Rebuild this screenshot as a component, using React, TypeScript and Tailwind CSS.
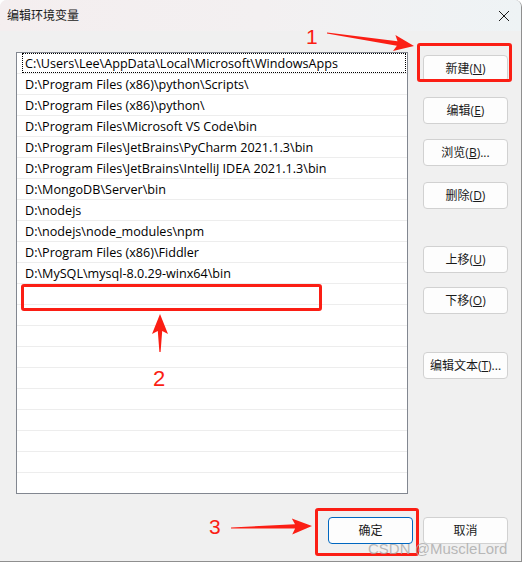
import React from "react";

const rows = [
  "C:\\Users\\Lee\\AppData\\Local\\Microsoft\\WindowsApps",
  "D:\\Program Files (x86)\\python\\Scripts\\",
  "D:\\Program Files (x86)\\python\\",
  "D:\\Program Files\\Microsoft VS Code\\bin",
  "D:\\Program Files\\JetBrains\\PyCharm 2021.1.3\\bin",
  "D:\\Program Files\\JetBrains\\IntelliJ IDEA 2021.1.3\\bin",
  "D:\\MongoDB\\Server\\bin",
  "D:\\nodejs",
  "D:\\nodejs\\node_modules\\npm",
  "D:\\Program Files (x86)\\Fiddler",
  "D:\\MySQL\\mysql-8.0.29-winx64\\bin",
  "",
  "",
  "",
  "",
  "",
  "",
  "",
  "",
  "",
];

function arrowPoints(tx: number, ty: number, px: number, py: number) {
  const dx = px - tx;
  const dy = py - ty;
  const L = Math.sqrt(dx * dx + dy * dy);
  const ux = dx / L;
  const uy = dy / L;
  const nx = -uy;
  const ny = ux;
  const headLen = 20;
  const headW = 8;
  const neckInner = 2.2;
  const bx = px - ux * headLen;
  const by = py - uy * headLen;
  const pts: [number, number][] = [
    [tx + nx * 0.6, ty + ny * 0.6],
    [bx + ux * 3 + nx * neckInner, by + uy * 3 + ny * neckInner],
    [bx + nx * headW, by + ny * headW],
    [px, py],
    [bx - nx * headW, by - ny * headW],
    [bx + ux * 3 - nx * neckInner, by + uy * 3 - ny * neckInner],
    [tx - nx * 0.6, ty - ny * 0.6],
  ];
  return pts.map((p) => p.map((v) => v.toFixed(1)).join(",")).join(" ");
}

function Btn({
  children,
  className = "",
  primary = false,
}: {
  children: React.ReactNode;
  className?: string;
  primary?: boolean;
}) {
  return (
    <div
      className={
        "flex h-[27px] w-[85px] items-center justify-center rounded-[4px] border bg-[#fdfdfd] text-[12px] text-[#1a1a1a] " +
        (primary ? "border-[#0067c0] " : "border-[#d1d1d1] ") +
        className
      }
    >
      {children}
    </div>
  );
}

export default function App() {
  const font = {
    fontFamily: '"Open Sans", "Noto Sans CJK SC", "Noto Sans", sans-serif',
  };
  return (
    <div
      className="relative h-[564px] w-[524px] overflow-hidden bg-white"
      style={font}
    >
      <div className="flex h-[562px] w-[522px] flex-col overflow-hidden rounded-t-[7px] border-b border-r border-[#8f8f8f] bg-[#f0f0f0]">
        {/* title bar */}
        <div className="flex h-[31px] shrink-0 items-center justify-between bg-gradient-to-r from-[#f4eeef] via-[#f3f0f1] to-[#eef3f5] pl-[7px] pr-[9px]">
          <span className="text-[12px] text-[#1a1a1a]">编辑环境变量</span>
          <svg width="12" height="12" viewBox="0 0 12 12" className="mr-[2px]">
            <path d="M1 1 L11 11 M11 1 L1 11" stroke="#1a1a1a" strokeWidth="1" />
          </svg>
        </div>
        {/* body */}
        <div className="flex flex-1 flex-col pl-[16px] pt-[21px]">
          <div className="flex">
            <div className="h-[442px] w-[392px] overflow-hidden border border-[#828790] bg-white">
              {rows.map((r, i) => (
                <div
                  key={i}
                  className="flex h-[21px] items-stretch border-b border-[#ededed] pl-[5px] pr-[1px]"
                >
                  <div
                    className={
                      "flex flex-1 items-center whitespace-nowrap pl-[2px] pt-[3px] text-[12.6px] leading-none text-black " +
                      (i === 0
                        ? "border border-dotted border-black"
                        : "border border-transparent")
                    }
                  >
                    {r}
                  </div>
                </div>
              ))}
            </div>
            <div className="ml-[15px] flex flex-col">
              <Btn className="mt-[3px]">
                新建(<span className="underline">N</span>)
              </Btn>
              <Btn className="mt-[15px]">
                编辑(<span className="underline">E</span>)
              </Btn>
              <Btn className="mt-[15px]">
                浏览(<span className="underline">B</span>)...
              </Btn>
              <Btn className="mt-[16px]">
                删除(<span className="underline">D</span>)
              </Btn>
              <Btn className="mt-[37px]">
                上移(<span className="underline">U</span>)
              </Btn>
              <Btn className="mt-[14px]">
                下移(<span className="underline">O</span>)
              </Btn>
              <Btn className="mt-[38px]">
                编辑文本(<span className="underline">T</span>)...
              </Btn>
            </div>
          </div>
          <div className="mt-[23px] flex justify-end gap-[10px] pr-[13px]">
            <Btn primary>确定</Btn>
            <Btn>取消</Btn>
          </div>
        </div>
      </div>

      {/* annotations */}
      <div className="pointer-events-none absolute left-[417px] top-[43px] h-[39px] w-[95px] rounded-[3px] border-[3px] border-[#fb1e14]" />
      <div className="pointer-events-none absolute left-[21px] top-[284px] h-[27px] w-[301px] rounded-[3px] border-[3px] border-[#fb1e14]" />
      <div className="pointer-events-none absolute left-[315px] top-[508px] h-[48px] w-[104px] rounded-[3px] border-[3px] border-[#fb1e14]" />

      <svg className="pointer-events-none absolute left-0 top-0" width="524" height="564">
        <polygon points={arrowPoints(327, 33, 414, 46)} fill="#fb1e14" />
        <polygon points={arrowPoints(160, 352, 160, 314)} fill="#fb1e14" />
        <polygon points={arrowPoints(231, 528, 312, 526)} fill="#fb1e14" />
      </svg>

      <span
        className="absolute left-[306px] top-[26px] text-[21px] leading-none text-[#fb1e14]"
        style={{ fontFamily: '"Liberation Sans", Arial, sans-serif' }}
      >
        1
      </span>
      <span
        className="absolute left-[153px] top-[368px] text-[22px] leading-none text-[#fb1e14]"
        style={{ fontFamily: '"Liberation Sans", Arial, sans-serif' }}
      >
        2
      </span>
      <span
        className="absolute left-[209px] top-[516px] text-[21px] leading-none text-[#fb1e14]"
        style={{ fontFamily: '"Liberation Sans", Arial, sans-serif' }}
      >
        3
      </span>
      <span
        className="absolute left-[368px] top-[541px] text-[15px] leading-none text-[#a8a8a8]/80"
        style={{ fontFamily: '"Liberation Sans", Arial, sans-serif' }}
      >
        CSDN @MuscleLord
      </span>
    </div>
  );
}
